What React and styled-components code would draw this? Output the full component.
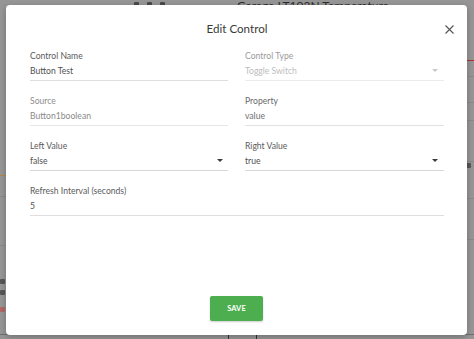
import React from "react";
import styled, { createGlobalStyle } from "styled-components";

const Global = createGlobalStyle`
  html, body { margin: 0; padding: 0; }
  body {
    width: 474px; height: 339px; overflow: hidden;
    font-family: Lato, "Open Sans", "Liberation Sans", sans-serif;
    background: #969696;
  }
`;

const Page = styled.div`
  position: relative;
  width: 474px;
  height: 339px;
  overflow: hidden;
  background: #969696;
`;

const TopBar = styled.div`
  height: 5px;
  overflow: hidden;
  display: flex;
  align-items: flex-end;
  gap: 62px;
  padding-left: 134px;
`;

const TopIcons = styled.div`
  display: flex;
  gap: 8px;
  margin-bottom: -2px;
`;

const TopIcon = styled.div`
  width: 5px;
  height: 5px;
  border-radius: 1px;
  background: #4a4a4a;
`;

const TopTitle = styled.div`
  color: #2e2e2e;
  font-size: 12px;
  line-height: 12px;
  margin-bottom: -7px;
  margin-left: 10px;
  white-space: nowrap;
`;

const SideStrip = styled.div`
  position: absolute;
  top: 0;
  bottom: 0;
  width: 8px;
  ${(p) => (p.$side === "left" ? "left: 0;" : "right: 0;")}
  display: flex;
  flex-direction: column;
  overflow: hidden;
`;

const StripLine = styled.div`
  margin-top: ${(p) => p.$top}px;
  height: 1px;
  flex: none;
  background: ${(p) => p.$color || "#8a8a8a"};
`;

const StripMark = styled.div`
  margin-top: ${(p) => p.$top}px;
  height: 5px;
  width: 5px;
  flex: none;
  border-radius: 1px;
  background: ${(p) => p.$color || "#3a3a3a"};
  opacity: 0.7;
`;

const Modal = styled.div`
  position: absolute;
  left: 6px;
  top: 5px;
  width: 461px;
  height: 330px;
  background: #fff;
  border-radius: 4px;
  box-shadow: 0 2px 6px rgba(0,0,0,0.25);
  display: flex;
  flex-direction: column;
  box-sizing: border-box;
  padding: 0 23px 14px 24px;
`;

const Header = styled.div`
  height: 45px;
  display: flex;
  align-items: center;
  justify-content: center;
  position: relative;
`;

const Title = styled.div`
  font-size: 11.6px;
  color: #3a3a3a;
  padding-top: 2px;
`;

const Close = styled.button`
  position: absolute;
  right: -10px;
  top: 19px;
  width: 10px;
  height: 10px;
  padding: 0;
  border: 0;
  background: transparent;
  display: flex;
  align-items: center;
  justify-content: center;
`;

const Form = styled.div`
  display: grid;
  grid-template-columns: 198px 199px;
  column-gap: 17px;
  row-gap: 14px;
`;

const Field = styled.div`
  display: flex;
  flex-direction: column;
  grid-column: ${(p) => (p.$full ? "1 / span 2" : "auto")};
`;

const Label = styled.div`
  font-size: 8.6px;
  line-height: 12px;
  color: ${(p) => p.$color || "#5a5a5a"};
  margin-bottom: 2px;
`;

const Input = styled.div`
  height: 17px;
  box-sizing: border-box;
  padding-bottom: 3px;
  display: flex;
  align-items: center;
  justify-content: space-between;
  font-size: 8.6px;
  color: ${(p) => p.$color || "#505050"};
  border-bottom: 1px solid ${(p) => p.$line || "#dedede"};
`;

const Arrow = styled.span`
  width: 0;
  height: 0;
  margin-right: ${(p) => p.$mr || 6}px;
  border-left: 3px solid transparent;
  border-right: 3px solid transparent;
  border-top: 3px solid ${(p) => p.$color || "#3a3a3a"};
`;

const Spacer = styled.div`
  flex: 1;
`;

const Footer = styled.div`
  display: flex;
  justify-content: center;
`;

const SaveButton = styled.button`
  width: 53px;
  height: 25px;
  background: #4cae4f;
  border: 0;
  border-radius: 2px;
  color: #fff;
  font-family: Lato, "Open Sans", sans-serif;
  font-weight: 700;
  font-size: 7.5px;
  letter-spacing: 0.1px;
  box-shadow: 0 1px 2px rgba(0,0,0,0.2);
  margin-right: 1px;
`;

const BottomBar = styled.div`
  position: absolute;
  left: 0;
  right: 0;
  bottom: 0;
  height: 4px;
  border-top: 1px solid #6f6f6f;
  display: flex;
  gap: 27px;
  padding-left: 228px;
`;

const Tick = styled.div`
  width: 1px;
  height: 4px;
  background: #333;
`;

export default function App() {
  return (
    <Page>
      <Global />
      <TopBar>
        <TopIcons>
          <TopIcon />
          <TopIcon />
          <TopIcon />
        </TopIcons>
        <TopTitle>Garage LT103N Temperature</TopTitle>
      </TopBar>
      <SideStrip $side="left">
        <StripLine $top={175} $color="#b08a4a" />
        <StripLine $top={20} />
        <StripLine $top={48} />
        <StripMark $top={33} />
        <StripMark $top={6} />
        <StripMark $top={12} $color="#c0504d" />
      </SideStrip>
      <SideStrip $side="right">
        <StripLine $top={60} $color="#b03030" />
        <StripLine $top={15} />
        <StripLine $top={25} />
        <StripLine $top={17} />
        <StripLine $top={40} />
        <StripMark $top={1} />
        <StripLine $top={30} />
        <StripLine $top={40} />
      </SideStrip>
      <BottomBar>
        <Tick />
        <Tick />
      </BottomBar>
      <Modal>
        <Header>
          <Title>Edit Control</Title>
          <Close aria-label="close">
            <svg width="9" height="9" viewBox="0 0 9 9">
              <path d="M0.5 0.5 L8.5 8.5 M8.5 0.5 L0.5 8.5" stroke="#555" strokeWidth="1.1" />
            </svg>
          </Close>
        </Header>
        <Form>
          <Field>
            <Label>Control Name</Label>
            <Input>Button Test</Input>
          </Field>
          <Field>
            <Label $color="#9a9a9a">Control Type</Label>
            <Input $color="#bdbdbd" $line="#ececec">
              Toggle Switch
              <Arrow $color="#c8c8c8" $mr={6} />
            </Input>
          </Field>
          <Field>
            <Label $color="#8e8e8e">Source</Label>
            <Input $color="#8a8a8a" $line="#e6e6e6">Button1boolean</Input>
          </Field>
          <Field>
            <Label $color="#6a6a6a">Property</Label>
            <Input $color="#707070" $line="#e2e2e2">value</Input>
          </Field>
          <Field>
            <Label>Left Value</Label>
            <Input $line="#d8d8d8">
              false
              <Arrow $mr={5} />
            </Input>
          </Field>
          <Field>
            <Label>Right Value</Label>
            <Input $line="#d8d8d8">
              true
              <Arrow $mr={6} />
            </Input>
          </Field>
          <Field $full>
            <Label>Refresh Interval (seconds)</Label>
            <Input>5</Input>
          </Field>
        </Form>
        <Spacer />
        <Footer>
          <SaveButton>SAVE</SaveButton>
        </Footer>
      </Modal>
    </Page>
  );
}
